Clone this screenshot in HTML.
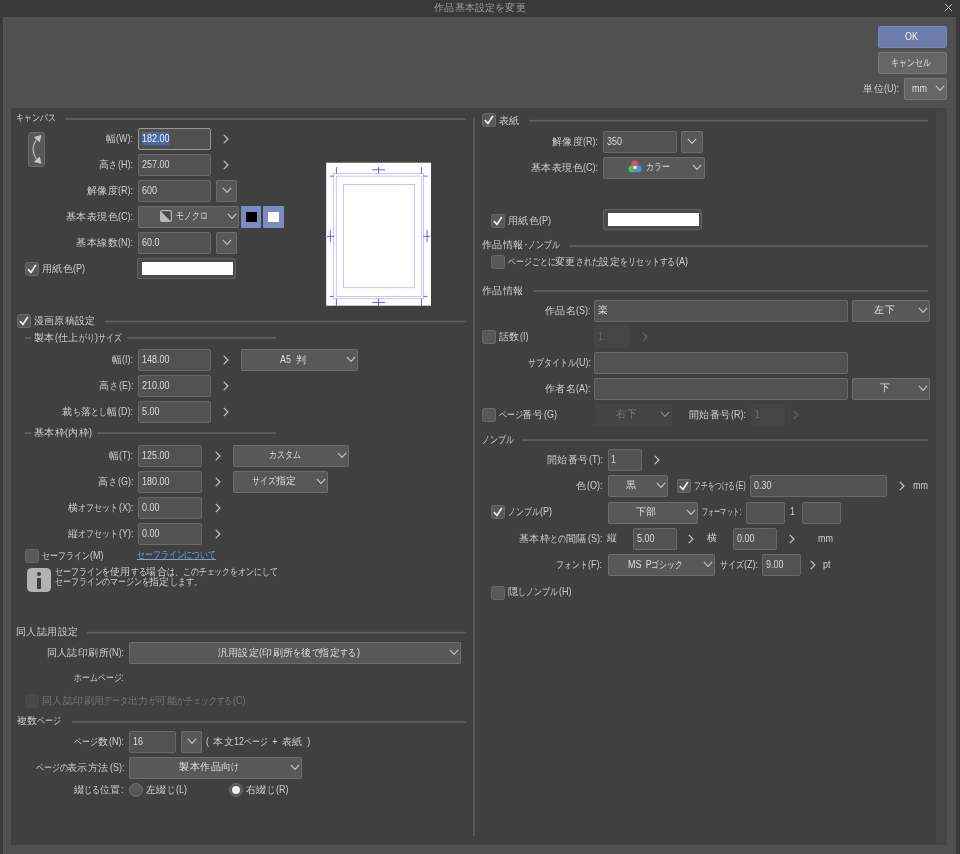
<!DOCTYPE html>
<html lang="ja"><head><meta charset="utf-8"><title>作品基本設定を変更</title>
<style>
*{box-sizing:border-box;margin:0;padding:0}
html,body{width:960px;height:854px;overflow:hidden;background:#393939}
body{position:relative;font-family:"Liberation Sans",sans-serif;font-size:10.4px;color:#cecece;letter-spacing:.4px}
#app{position:absolute;left:0;top:0;width:960px;height:854px;will-change:transform}
#app>div,#app>svg{position:absolute}
.titlebar{left:0;top:0;width:960px;height:17px;background:#393939}
.title{position:absolute;left:380px;width:200px;top:0;height:17px;line-height:15px;text-align:center;color:#9c9c9c;font-size:10.4px;white-space:nowrap;letter-spacing:.15px}
.close{position:absolute;left:943.5px;top:2.8px}
.body{left:3px;top:17px;width:953px;height:837px;background:#505050;box-shadow:inset 1px 0 rgba(255,255,255,.04)}
.panel{left:11px;top:108px;width:925px;height:737px;background:#404040}
.strip{left:936px;top:108px;width:11px;height:737px;background:#454545}
.vl{background:linear-gradient(90deg,rgba(255,255,255,.14) 0 1px,rgba(255,255,255,.11) 1px 2px)}
.hl{}
.t{height:14px;line-height:14px;white-space:nowrap}
.a{display:inline-block;letter-spacing:0;font-size:11.5px;transform:scaleX(.78);transform-origin:0 50%;white-space:pre;word-spacing:2.2px}
.k{display:inline-block;letter-spacing:0;transform:scaleX(.79);transform-origin:0 50%;white-space:pre}
.k+.a{margin-left:1px}
.tr{text-align:right}
.dim{color:#767676}
.link{color:#6fa2dc}
.link span{text-decoration:underline}
.sq{display:inline-block;white-space:nowrap}
.note{height:auto;line-height:10.4px;white-space:nowrap}
.inp{background:#525252;border:1px solid #686868;border-radius:2px;padding-left:2.8px;line-height:18px;white-space:nowrap;overflow:hidden;font-size:10.4px;color:#dcdcdc}
.inp.foc{border-color:#989898;background:#505050}
.inp.dis{background:#454545;border-color:#464646;color:#6c6c6c}
.sel{background:#4a68a2;color:#f0f0f0;padding:1px 0 1px}
.dd{background:rgba(255,255,255,.125);border:1px solid rgba(255,255,255,.13);border-radius:2px;line-height:18px;white-space:nowrap;overflow:hidden;color:#dedede}
.dd .ddt{position:absolute;left:0;right:12.5px;top:0;bottom:0;text-align:center;display:block}
.dd .chev{position:absolute;right:1.5px;top:6px;color:#c4c4c4}
.dd.bt .chev{right:4.5px}
.dd.dis{background:#444;border-color:#454545;color:#7a7a7a}
.dd.dis .chev{color:#8a8a8a}
.dd .ic{vertical-align:-3px;margin-right:4px;margin-left:2px}
.cb{background:#585858;border:1px solid #686868;border-radius:2.5px}
.cb svg{position:absolute;left:-1px;top:-1px}
.cb.dis{background:#484848;border-color:#4a4a4a}
.rd{background:#585858;border:1px solid #6c6c6c;border-radius:50%}
.rd i{position:absolute;left:2px;top:2px;width:8px;height:8px;border-radius:50%;background:#ececec}
.ar{color:#c6c6c6}
.ar.dim{color:#646464}
.ok{background:#6c7dab;border:1px solid #7384b2;border-radius:2px;text-align:center;padding-right:2px;line-height:19px;color:#f0f0f0;font-size:10.4px}
.cancel{background:#666;border:1px solid #7a7a7a;border-radius:2px;text-align:center;padding-right:3px;line-height:19px;color:#e0e0e0}
.swap{background:#585858;border:1px solid #696969;border-radius:3px}
.swap svg{position:absolute;left:-1px;top:-1px}
.sw{background:#7b8dc0;border-radius:1px}
.sw i{position:absolute;left:5px;top:5.5px;width:10.5px;height:10px}
.paper{background:#4c4c4c;border:1px solid #626262;border-radius:2px}
.paper i{position:absolute;left:3.5px;top:2.5px;right:2px;bottom:3.5px;background:#fff}
.info{background:#b2b2b2;border-radius:4.5px}
.info i{position:absolute;left:10px;top:3.5px;width:4px;height:4px;border-radius:50%;background:#3c3c3c}
.info b{position:absolute;left:10px;top:9.5px;width:3.6px;height:11.5px;border-radius:1px;background:#3c3c3c}
</style></head>
<body>
<div id="app">
<div class="titlebar"><div class="title">作品基本設定を変更</div><svg class="close" width="9" height="9" viewBox="0 0 9 9"><path d="M0.9 0.9 L8.1 8.1 M8.1 0.9 L0.9 8.1" stroke="#c4c4c4" stroke-width="0.95" fill="none"/></svg></div>
<div class="body"></div>
<div class="panel"></div><div class="strip"></div>
<div class="vl" style="left:473px;top:117px;width:2px;height:719px;"></div>
<div class="ok" style="left:878px;top:26px;width:69px;height:22px;"><span class="a" style="margin-right:-3.7px">OK</span></div>
<div class="cancel" style="left:878px;top:52px;width:69px;height:22px;"><span class="k" style="margin-right:-10.9px">キャンセル</span></div>
<div class="t tr " style="left:699px;top:80.5px;width:200px">単位<span class="a" style="margin-right:-4.2px">(U):</span></div>
<div class="dd " style="left:904px;top:78px;width:43px;height:22px;"><span class="ddt"><span class="a" style="margin-right:-4.2px">mm</span></span><svg class="chev" width="10" height="7" viewBox="0 0 10 7"><path d="M0.85 0.9 L5 5.3 L9.15 0.9" fill="none" stroke="currentColor" stroke-width="1.15"/></svg></div>
<div class="t " style="left:16px;top:111px"><span class="k" style="margin-right:-10.9px">キャンバス</span></div>
<div class="hl" style="left:65px;top:118px;width:401px;height:2px;background:linear-gradient(rgba(255,255,255,0.128) 0px 1px,rgba(255,255,255,0.144) 1px 2px)"></div>
<div class="swap" style="left:28px;top:132px;width:17px;height:35px;"><svg width="17" height="35" viewBox="0 0 17 35"><path d="M8.4 7.6 Q1.6 17.4 8.4 27.2" fill="none" stroke="#c4c4c4" stroke-width="1.1"/><path d="M5.7 4.9 L13.6 2.9 L11.7 10.3 Z" fill="#c6c6c6"/><path d="M5.7 30.1 L13.6 31.8 L11.7 24.4 Z" fill="#c6c6c6"/></svg></div>
<div class="t tr " style="left:-67px;top:130.5px;width:200px">幅<span class="a" style="margin-right:-4.8px">(W):</span></div>
<div class="inp foc" style="left:138px;top:128px;width:73px;height:22px;"><span class="sel"><span class="a" style="margin-right:-7.7px">182.00</span></span></div>
<svg class="ar " style="left:222.5px;top:133.5px" width="6" height="10" viewBox="0 0 6 10"><path d="M0.8 0.8 L4.9 5 L0.8 9.2" fill="none" stroke="currentColor" stroke-width="1.2"/></svg>
<div class="t tr " style="left:-67px;top:156.5px;width:200px">高<span class="k" style="margin-right:-2.2px">さ</span><span class="a" style="margin-right:-4.2px">(H):</span></div>
<div class="inp " style="left:138px;top:154px;width:73px;height:22px;"><span class="a" style="margin-right:-7.7px">257.00</span></div>
<svg class="ar " style="left:222.5px;top:159.5px" width="6" height="10" viewBox="0 0 6 10"><path d="M0.8 0.8 L4.9 5 L0.8 9.2" fill="none" stroke="currentColor" stroke-width="1.2"/></svg>
<div class="t tr " style="left:-67px;top:182.5px;width:200px">解像度<span class="a" style="margin-right:-4.2px">(R):</span></div>
<div class="inp " style="left:138px;top:180px;width:73px;height:22px;"><span class="a" style="margin-right:-4.2px">600</span></div>
<div class="dd bt" style="left:216px;top:180px;width:21px;height:22px;"><svg class="chev" width="10" height="7" viewBox="0 0 10 7"><path d="M0.85 0.9 L5 5.3 L9.15 0.9" fill="none" stroke="currentColor" stroke-width="1.15"/></svg></div>
<div class="t tr " style="left:-67px;top:209px;width:200px">基本表現色<span class="a" style="margin-right:-4.2px">(C):</span></div>
<div class="dd " style="left:138px;top:206px;width:101px;height:22px;"><span class="ddt"><svg class="ic" width="12" height="12" viewBox="0 0 12 12"><rect x="0.6" y="0.6" width="10.8" height="10.8" rx="1.6" fill="#474747" stroke="#b8b8b8" stroke-width="1.2"/><path d="M1 1.6 L10.4 11 L1 11 Z" fill="#b8b8b8"/></svg><span class="k" style="margin-right:-8.7px">モノクロ</span></span><svg class="chev" width="10" height="7" viewBox="0 0 10 7"><path d="M0.85 0.9 L5 5.3 L9.15 0.9" fill="none" stroke="currentColor" stroke-width="1.15"/></svg></div>
<div class="sw" style="left:241px;top:206px;width:20px;height:22px;"><i style="background:#000"></i></div>
<div class="sw" style="left:263px;top:206px;width:21px;height:22px;"><i style="background:#fff"></i></div>
<div class="t tr " style="left:-67px;top:234.5px;width:200px">基本線数<span class="a" style="margin-right:-4.2px">(N):</span></div>
<div class="inp " style="left:138px;top:232px;width:73px;height:22px;"><span class="a" style="margin-right:-4.9px">60.0</span></div>
<div class="dd bt" style="left:216px;top:232px;width:21px;height:22px;"><svg class="chev" width="10" height="7" viewBox="0 0 10 7"><path d="M0.85 0.9 L5 5.3 L9.15 0.9" fill="none" stroke="currentColor" stroke-width="1.15"/></svg></div>
<div class="cb " style="left:25px;top:262px;width:14px;height:14px;"><svg width="14" height="14" viewBox="0 0 14 14"><path d="M2.9 7.2 L6 10.5 L10.9 2.9" fill="none" stroke="#f0f0f0" stroke-width="1.7"/></svg></div>
<div class="t " style="left:42px;top:260.5px">用紙色<span class="a" style="margin-right:-3.4px">(P)</span></div>
<div class="paper" style="left:137px;top:258px;width:99px;height:21px;"><i></i></div>
<svg class="pv" style="left:326px;top:162px" width="106" height="145" viewBox="0 0 106 145">
<rect x="0.2" y="0.7" width="104.8" height="143" fill="#fff"/>
<g fill="none" stroke="#9696ff" stroke-width="0.55">
<rect x="7.6" y="11.5" width="89.8" height="125.3"/>
<rect x="10.2" y="14.1" width="85.3" height="120.3"/>
<rect x="17.3" y="22.5" width="71.3" height="103.3"/>
</g>
<g fill="none" stroke="#4444f2" stroke-width="0.85">
<path d="M10.4 5 V11.5 M95.5 5 V11.5 M4 14.1 H7.6 M97.4 14.1 H101.6"/>
<path d="M10.4 136.8 V143.7 M95.5 136.8 V143.7 M4 134.4 H7.6 M97.4 134.4 H101.6"/>
<path d="M46.2 7.8 H59 M52.5 5 V11.5 M46.2 140.5 H59 M52.5 136.8 V143.7"/>
<path d="M4.3 68.2 V79.9 M1 74.4 H8 M101.1 68.2 V79.9 M97 74.4 H104.2"/>
</g></svg>
<div class="cb " style="left:16.5px;top:314px;width:14px;height:14px;"><svg width="14" height="14" viewBox="0 0 14 14"><path d="M2.9 7.2 L6 10.5 L10.9 2.9" fill="none" stroke="#f0f0f0" stroke-width="1.7"/></svg></div>
<div class="t " style="left:33.5px;top:314px">漫画原稿設定</div>
<div class="hl" style="left:105px;top:320px;width:361px;height:3px;background:linear-gradient(rgba(255,255,255,0.056) 0px 1px,rgba(255,255,255,0.160) 1px 2px,rgba(255,255,255,0.056) 2px 3px)"></div>
<div class="hl" style="left:25px;top:337px;width:6px;height:2px;background:linear-gradient(rgba(255,255,255,0.152) 0px 1px,rgba(255,255,255,0.120) 1px 2px)"></div>
<div class="t " style="left:34px;top:330px">製本<span class="a" style="margin-right:-0.8px">(</span>仕上<span class="k" style="margin-right:-4.4px">がり</span><span class="a" style="margin-right:-0.8px">)</span><span class="k" style="margin-right:-6.6px">サイズ</span></div>
<div class="hl" style="left:127px;top:337px;width:149px;height:2px;background:linear-gradient(rgba(255,255,255,0.152) 0px 1px,rgba(255,255,255,0.120) 1px 2px)"></div>
<div class="t tr " style="left:-67px;top:352px;width:200px">幅<span class="a" style="margin-right:-3.1px">(I):</span></div>
<div class="inp " style="left:138px;top:349px;width:73px;height:22px;"><span class="a" style="margin-right:-7.7px">148.00</span></div>
<svg class="ar " style="left:222.5px;top:355px" width="6" height="10" viewBox="0 0 6 10"><path d="M0.8 0.8 L4.9 5 L0.8 9.2" fill="none" stroke="currentColor" stroke-width="1.2"/></svg>
<div class="dd " style="left:241px;top:349px;width:117px;height:22px;"><span class="ddt"><span class="a" style="margin-right:-4.3px">A5 </span>判</span><svg class="chev" width="10" height="7" viewBox="0 0 10 7"><path d="M0.85 0.9 L5 5.3 L9.15 0.9" fill="none" stroke="currentColor" stroke-width="1.15"/></svg></div>
<div class="t tr " style="left:-67px;top:378px;width:200px">高<span class="k" style="margin-right:-2.2px">さ</span><span class="a" style="margin-right:-4.1px">(E):</span></div>
<div class="inp " style="left:138px;top:375px;width:73px;height:22px;"><span class="a" style="margin-right:-7.7px">210.00</span></div>
<svg class="ar " style="left:222.5px;top:381px" width="6" height="10" viewBox="0 0 6 10"><path d="M0.8 0.8 L4.9 5 L0.8 9.2" fill="none" stroke="currentColor" stroke-width="1.2"/></svg>
<div class="t tr " style="left:-67px;top:404px;width:200px">裁<span class="k" style="margin-right:-2.2px">ち</span>落<span class="k" style="margin-right:-4.4px">とし</span>幅<span class="a" style="margin-right:-4.2px">(D):</span></div>
<div class="inp " style="left:138px;top:401px;width:73px;height:22px;"><span class="a" style="margin-right:-4.9px">5.00</span></div>
<svg class="ar " style="left:222.5px;top:407px" width="6" height="10" viewBox="0 0 6 10"><path d="M0.8 0.8 L4.9 5 L0.8 9.2" fill="none" stroke="currentColor" stroke-width="1.2"/></svg>
<div class="hl" style="left:25px;top:432px;width:6px;height:2px;background:linear-gradient(rgba(255,255,255,0.120) 0px 1px,rgba(255,255,255,0.152) 1px 2px)"></div>
<div class="t " style="left:34px;top:425px">基本枠<span class="a" style="margin-right:-0.8px">(</span>内枠<span class="a" style="margin-right:-0.8px">)</span></div>
<div class="hl" style="left:97px;top:432px;width:179px;height:2px;background:linear-gradient(rgba(255,255,255,0.120) 0px 1px,rgba(255,255,255,0.152) 1px 2px)"></div>
<div class="t tr " style="left:-67px;top:447.5px;width:200px">幅<span class="a" style="margin-right:-3.9px">(T):</span></div>
<div class="inp " style="left:138px;top:445px;width:64px;height:22px;"><span class="a" style="margin-right:-7.7px">125.00</span></div>
<svg class="ar " style="left:214.5px;top:450.5px" width="6" height="10" viewBox="0 0 6 10"><path d="M0.8 0.8 L4.9 5 L0.8 9.2" fill="none" stroke="currentColor" stroke-width="1.2"/></svg>
<div class="dd " style="left:233px;top:445px;width:116px;height:22px;"><span class="ddt"><span class="k" style="margin-right:-8.7px">カスタム</span></span><svg class="chev" width="10" height="7" viewBox="0 0 10 7"><path d="M0.85 0.9 L5 5.3 L9.15 0.9" fill="none" stroke="currentColor" stroke-width="1.15"/></svg></div>
<div class="t tr " style="left:-67px;top:473.5px;width:200px">高<span class="k" style="margin-right:-2.2px">さ</span><span class="a" style="margin-right:-4.4px">(G):</span></div>
<div class="inp " style="left:138px;top:471px;width:64px;height:22px;"><span class="a" style="margin-right:-7.7px">180.00</span></div>
<svg class="ar " style="left:214.5px;top:476.5px" width="6" height="10" viewBox="0 0 6 10"><path d="M0.8 0.8 L4.9 5 L0.8 9.2" fill="none" stroke="currentColor" stroke-width="1.2"/></svg>
<div class="dd " style="left:233px;top:471px;width:95px;height:22px;"><span class="ddt"><span class="k" style="margin-right:-6.6px">サイズ</span>指定</span><svg class="chev" width="10" height="7" viewBox="0 0 10 7"><path d="M0.85 0.9 L5 5.3 L9.15 0.9" fill="none" stroke="currentColor" stroke-width="1.15"/></svg></div>
<div class="t tr " style="left:-67px;top:499.5px;width:200px">横<span class="k" style="margin-right:-10.9px">オフセット</span><span class="a" style="margin-right:-4.1px">(X):</span></div>
<div class="inp " style="left:138px;top:497px;width:64px;height:22px;"><span class="a" style="margin-right:-4.9px">0.00</span></div>
<svg class="ar " style="left:214.5px;top:502.5px" width="6" height="10" viewBox="0 0 6 10"><path d="M0.8 0.8 L4.9 5 L0.8 9.2" fill="none" stroke="currentColor" stroke-width="1.2"/></svg>
<div class="t tr " style="left:-67px;top:525.5px;width:200px">縦<span class="k" style="margin-right:-10.9px">オフセット</span><span class="a" style="margin-right:-4.1px">(Y):</span></div>
<div class="inp " style="left:138px;top:523px;width:64px;height:22px;"><span class="a" style="margin-right:-4.9px">0.00</span></div>
<svg class="ar " style="left:214.5px;top:528.5px" width="6" height="10" viewBox="0 0 6 10"><path d="M0.8 0.8 L4.9 5 L0.8 9.2" fill="none" stroke="currentColor" stroke-width="1.2"/></svg>
<div class="cb " style="left:25px;top:549px;width:14px;height:14px;"></div>
<div class="t " style="left:42px;top:548px"><span class="k" style="margin-right:-13.1px">セーフライン</span><span class="a" style="margin-right:-3.8px">(M)</span></div>
<div class="t link" style="left:137px;top:548px"><span class="k" style="margin-right:-21.8px">セーフラインについて</span></div>
<div class="info" style="left:27px;top:568px;width:24px;height:24px;"><i></i><b></b></div>
<div class="t note" style="left:55px;top:567px"><span class="k" style="margin-right:-15.3px">セーフラインを</span>使用<span class="k" style="margin-right:-4.4px">する</span>場合<span class="k" style="margin-right:-30.6px">は、このチェックをオンにして</span><br><span class="k" style="margin-right:-26.2px">セーフラインのマージンを</span>指定<span class="k" style="margin-right:-8.7px">します。</span></div>
<div class="t " style="left:16px;top:625px">同人誌用設定</div>
<div class="hl" style="left:87px;top:631px;width:379px;height:3px;background:linear-gradient(rgba(255,255,255,0.024) 0px 1px,rgba(255,255,255,0.160) 1px 2px,rgba(255,255,255,0.088) 2px 3px)"></div>
<div class="t tr " style="left:-76px;top:645px;width:200px">同人誌印刷所<span class="a" style="margin-right:-4.2px">(N):</span></div>
<div class="dd " style="left:129px;top:642px;width:332px;height:22px;"><span class="ddt">汎用設定<span class="a" style="margin-right:-0.8px">(</span>印刷所<span class="k" style="margin-right:-2.2px">を</span>後<span class="k" style="margin-right:-2.2px">で</span>指定<span class="k" style="margin-right:-4.4px">する</span><span class="a" style="margin-right:-0.8px">)</span></span><svg class="chev" width="10" height="7" viewBox="0 0 10 7"><path d="M0.85 0.9 L5 5.3 L9.15 0.9" fill="none" stroke="currentColor" stroke-width="1.15"/></svg></div>
<div class="t tr " style="left:-76px;top:670px;width:200px"><span class="k" style="margin-right:-13.1px">ホームページ</span><span class="a" style="margin-right:-0.7px">:</span></div>
<div class="cb dis" style="left:25px;top:694px;width:14px;height:14px;"></div>
<div class="t dim" style="left:42px;top:693px">同人誌印刷用<span class="k" style="margin-right:-6.6px">データ</span>出力<span class="k" style="margin-right:-2.2px">が</span>可能<span class="k" style="margin-right:-15.3px">かチェックする</span><span class="a" style="margin-right:-3.5px">(C)</span></div>
<div class="t " style="left:16.5px;top:714px">複数<span class="k" style="margin-right:-6.6px">ページ</span></div>
<div class="hl" style="left:72px;top:721px;width:394px;height:2px;background:linear-gradient(rgba(255,255,255,0.152) 0px 1px,rgba(255,255,255,0.120) 1px 2px)"></div>
<div class="t tr " style="left:-76px;top:733.5px;width:200px"><span class="k" style="margin-right:-6.6px">ページ</span>数<span class="a" style="margin-right:-4.2px">(N):</span></div>
<div class="inp " style="left:129px;top:731px;width:47px;height:22px;"><span class="a" style="margin-right:-2.8px">16</span></div>
<div class="dd bt" style="left:181px;top:731px;width:21px;height:22px;"><svg class="chev" width="10" height="7" viewBox="0 0 10 7"><path d="M0.85 0.9 L5 5.3 L9.15 0.9" fill="none" stroke="currentColor" stroke-width="1.15"/></svg></div>
<div class="t " style="left:206px;top:733.5px"><span class="a" style="margin-right:-2.0px">( </span>本文<span class="a" style="margin-right:-2.8px">12</span><span class="k" style="margin-right:-6.6px">ページ</span><span class="a" style="margin-right:-3.9px"> + </span>表紙<span class="a" style="margin-right:-2.0px"> )</span></div>
<div class="t tr " style="left:-76px;top:759.5px;width:200px"><span class="k" style="margin-right:-8.7px">ページの</span>表示方法<span class="a" style="margin-right:-4.1px">(S):</span></div>
<div class="dd " style="left:129px;top:757px;width:173px;height:22px;"><span class="ddt">製本作品向<span class="k" style="margin-right:-2.2px">け</span></span><svg class="chev" width="10" height="7" viewBox="0 0 10 7"><path d="M0.85 0.9 L5 5.3 L9.15 0.9" fill="none" stroke="currentColor" stroke-width="1.15"/></svg></div>
<div class="t tr " style="left:-76px;top:782px;width:200px">綴<span class="k" style="margin-right:-4.4px">じる</span>位置<span class="a" style="margin-right:-0.7px">:</span></div>
<div class="rd" style="left:129px;top:783px;width:14px;height:14px;"></div>
<div class="t " style="left:146px;top:782px">左綴<span class="k" style="margin-right:-2.2px">じ</span><span class="a" style="margin-right:-3.1px">(L)</span></div>
<div class="rd" style="left:228.5px;top:783px;width:14px;height:14px;"><i></i></div>
<div class="t " style="left:246px;top:782px">右綴<span class="k" style="margin-right:-2.2px">じ</span><span class="a" style="margin-right:-3.5px">(R)</span></div>
<div class="cb " style="left:482px;top:113px;width:14px;height:14px;"><svg width="14" height="14" viewBox="0 0 14 14"><path d="M2.9 7.2 L6 10.5 L10.9 2.9" fill="none" stroke="#f0f0f0" stroke-width="1.7"/></svg></div>
<div class="t " style="left:499px;top:113.5px">表紙</div>
<div class="hl" style="left:529px;top:119px;width:398.5px;height:3px;background:linear-gradient(rgba(255,255,255,0.024) 0px 1px,rgba(255,255,255,0.160) 1px 2px,rgba(255,255,255,0.088) 2px 3px)"></div>
<div class="t tr " style="left:398px;top:134px;width:200px">解像度<span class="a" style="margin-right:-4.2px">(R):</span></div>
<div class="inp " style="left:603px;top:131px;width:74px;height:22px;"><span class="a" style="margin-right:-4.2px">350</span></div>
<div class="dd bt" style="left:681px;top:131px;width:21.5px;height:22px;"><svg class="chev" width="10" height="7" viewBox="0 0 10 7"><path d="M0.85 0.9 L5 5.3 L9.15 0.9" fill="none" stroke="currentColor" stroke-width="1.15"/></svg></div>
<div class="t tr " style="left:398px;top:160px;width:200px">基本表現色<span class="a" style="margin-right:-4.2px">(C):</span></div>
<div class="dd " style="left:603px;top:157px;width:101.5px;height:22px;"><span class="ddt"><svg class="ic" width="14" height="13" viewBox="0 0 14 13"><circle cx="7" cy="4" r="3.6" fill="#e0525a"/><circle cx="4" cy="9" r="3.6" fill="#58b85c"/><circle cx="10" cy="9" r="3.6" fill="#4f8fe0"/><circle cx="7" cy="7.4" r="1.6" fill="#f0f0f0"/></svg><span class="k" style="margin-right:-6.6px">カラー</span></span><svg class="chev" width="10" height="7" viewBox="0 0 10 7"><path d="M0.85 0.9 L5 5.3 L9.15 0.9" fill="none" stroke="currentColor" stroke-width="1.15"/></svg></div>
<div class="cb " style="left:491px;top:214px;width:14px;height:14px;"><svg width="14" height="14" viewBox="0 0 14 14"><path d="M2.9 7.2 L6 10.5 L10.9 2.9" fill="none" stroke="#f0f0f0" stroke-width="1.7"/></svg></div>
<div class="t " style="left:508px;top:212.5px">用紙色<span class="a" style="margin-right:-3.4px">(P)</span></div>
<div class="paper" style="left:603px;top:209px;width:99px;height:21px;"><i></i></div>
<div class="t " style="left:482px;top:238px">作品情報<span class="k" style="margin:0 -4.2px 0 -1.8px">・</span><span class="k" style="margin-right:-8.7px">ノンブル</span></div>
<div class="hl" style="left:569px;top:245px;width:358.5px;height:2px;background:linear-gradient(rgba(255,255,255,0.136) 0px 1px,rgba(255,255,255,0.136) 1px 2px)"></div>
<div class="cb " style="left:491px;top:255px;width:14px;height:14px;"></div>
<div class="t " style="left:508px;top:253.5px"><span class="k" style="margin-right:-13.1px">ページごとに</span>変更<span class="k" style="margin-right:-6.6px">された</span>設定<span class="k" style="margin-right:-15.3px">をリセットする</span><span class="a" style="margin-right:-3.4px">(A)</span></div>
<div class="t " style="left:482px;top:283.5px">作品情報</div>
<div class="hl" style="left:533px;top:290px;width:394.5px;height:2px;background:linear-gradient(rgba(255,255,255,0.136) 0px 1px,rgba(255,255,255,0.136) 1px 2px)"></div>
<div class="t tr " style="left:390.5px;top:303px;width:200px">作品名<span class="a" style="margin-right:-4.1px">(S):</span></div>
<div class="inp " style="left:594px;top:300px;width:254px;height:22px;">楽</div>
<div class="dd " style="left:852px;top:300px;width:78px;height:22px;"><span class="ddt">左下</span><svg class="chev" width="10" height="7" viewBox="0 0 10 7"><path d="M0.85 0.9 L5 5.3 L9.15 0.9" fill="none" stroke="currentColor" stroke-width="1.15"/></svg></div>
<div class="cb " style="left:482px;top:330px;width:14px;height:14px;"></div>
<div class="t " style="left:499px;top:328.5px">話数<span class="a" style="margin-right:-2.4px">(I)</span></div>
<div class="inp dis" style="left:594px;top:326px;width:35px;height:22px;"><span class="a" style="margin-right:-1.4px">1</span></div>
<svg class="ar dim" style="left:642px;top:331.5px" width="6" height="10" viewBox="0 0 6 10"><path d="M0.8 0.8 L4.9 5 L0.8 9.2" fill="none" stroke="currentColor" stroke-width="1.2"/></svg>
<div class="t tr " style="left:390.5px;top:355px;width:200px"><span class="k" style="margin-right:-13.1px">サブタイトル</span><span class="a" style="margin-right:-4.2px">(U):</span></div>
<div class="inp " style="left:594px;top:352px;width:254px;height:22px;"></div>
<div class="t tr " style="left:390.5px;top:380.5px;width:200px">作者名<span class="a" style="margin-right:-4.1px">(A):</span></div>
<div class="inp " style="left:594px;top:378px;width:254px;height:22px;"></div>
<div class="dd " style="left:852px;top:378px;width:78px;height:22px;"><span class="ddt">下</span><svg class="chev" width="10" height="7" viewBox="0 0 10 7"><path d="M0.85 0.9 L5 5.3 L9.15 0.9" fill="none" stroke="currentColor" stroke-width="1.15"/></svg></div>
<div class="cb " style="left:482px;top:407.5px;width:14px;height:14px;"></div>
<div class="t " style="left:499px;top:406.5px"><span class="k" style="margin-right:-6.6px">ページ</span>番号<span class="a" style="margin-right:-3.7px">(G)</span></div>
<div class="dd dis" style="left:594px;top:404px;width:78px;height:22px;"><span class="ddt">右下</span><svg class="chev" width="10" height="7" viewBox="0 0 10 7"><path d="M0.85 0.9 L5 5.3 L9.15 0.9" fill="none" stroke="currentColor" stroke-width="1.15"/></svg></div>
<div class="t tr " style="left:545.5px;top:406.5px;width:200px">開始番号<span class="a" style="margin-right:-4.2px">(R):</span></div>
<div class="inp dis" style="left:751px;top:404px;width:34px;height:22px;"><span class="a" style="margin-right:-1.4px">1</span></div>
<svg class="ar dim" style="left:792.5px;top:409.5px" width="6" height="10" viewBox="0 0 6 10"><path d="M0.8 0.8 L4.9 5 L0.8 9.2" fill="none" stroke="currentColor" stroke-width="1.2"/></svg>
<div class="t " style="left:482px;top:432.5px"><span class="k" style="margin-right:-8.7px">ノンブル</span></div>
<div class="hl" style="left:522px;top:439px;width:405.5px;height:2px;background:linear-gradient(rgba(255,255,255,0.120) 0px 1px,rgba(255,255,255,0.152) 1px 2px)"></div>
<div class="t tr " style="left:402.5px;top:451.5px;width:200px">開始番号<span class="a" style="margin-right:-3.9px">(T):</span></div>
<div class="inp " style="left:607.5px;top:449px;width:34.5px;height:22px;"><span class="a" style="margin-right:-1.4px">1</span></div>
<svg class="ar " style="left:654px;top:454.5px" width="6" height="10" viewBox="0 0 6 10"><path d="M0.8 0.8 L4.9 5 L0.8 9.2" fill="none" stroke="currentColor" stroke-width="1.2"/></svg>
<div class="t tr " style="left:402px;top:477.5px;width:200px">色<span class="a" style="margin-right:-4.4px">(O):</span></div>
<div class="dd " style="left:607.5px;top:475px;width:60.5px;height:22px;"><span class="ddt">黒</span><svg class="chev" width="10" height="7" viewBox="0 0 10 7"><path d="M0.85 0.9 L5 5.3 L9.15 0.9" fill="none" stroke="currentColor" stroke-width="1.15"/></svg></div>
<div class="cb " style="left:677px;top:479px;width:14px;height:14px;"><svg width="14" height="14" viewBox="0 0 14 14"><path d="M2.9 7.2 L6 10.5 L10.9 2.9" fill="none" stroke="#f0f0f0" stroke-width="1.7"/></svg></div>
<div class="t tr " style="left:545.5px;top:477.5px;width:200px"><span class="sq" style="transform:scaleX(0.86);transform-origin:100% 50%"><span class="k" style="margin-right:-13.1px">フチをつける</span><span class="a" style="margin-right:-3.4px">(E)</span></span></div>
<div class="inp " style="left:750px;top:475px;width:137px;height:22px;"><span class="a" style="margin-right:-4.9px">0.30</span></div>
<svg class="ar " style="left:898.5px;top:480.5px" width="6" height="10" viewBox="0 0 6 10"><path d="M0.8 0.8 L4.9 5 L0.8 9.2" fill="none" stroke="currentColor" stroke-width="1.2"/></svg>
<div class="t " style="left:913px;top:477.5px"><span class="a" style="margin-right:-4.2px">mm</span></div>
<div class="cb " style="left:491px;top:505px;width:14px;height:14px;"><svg width="14" height="14" viewBox="0 0 14 14"><path d="M2.9 7.2 L6 10.5 L10.9 2.9" fill="none" stroke="#f0f0f0" stroke-width="1.7"/></svg></div>
<div class="t " style="left:508px;top:504px"><span class="k" style="margin-right:-8.7px">ノンブル</span><span class="a" style="margin-right:-3.4px">(P)</span></div>
<div class="dd " style="left:607.5px;top:502px;width:90.5px;height:22px;"><span class="ddt">下部</span><svg class="chev" width="10" height="7" viewBox="0 0 10 7"><path d="M0.85 0.9 L5 5.3 L9.15 0.9" fill="none" stroke="currentColor" stroke-width="1.15"/></svg></div>
<div class="t " style="left:702px;top:504px"><span class="sq" style="transform:scaleX(0.78);transform-origin:0 50%"><span class="k" style="margin-right:-13.1px">フォーマット</span><span class="a" style="margin-right:-0.7px">:</span></span></div>
<div class="inp " style="left:746px;top:502px;width:39px;height:22px;"></div>
<div class="t " style="left:790px;top:504px"><span class="a" style="margin-right:-1.4px">1</span></div>
<div class="inp " style="left:802px;top:502px;width:39px;height:22px;"></div>
<div class="t tr " style="left:402px;top:530.5px;width:200px">基本枠<span class="k" style="margin-right:-4.4px">との</span>間隔<span class="a" style="margin-right:-4.1px">(S):</span></div>
<div class="t " style="left:607px;top:530.5px">縦</div>
<div class="inp " style="left:633px;top:528px;width:43.5px;height:22px;"><span class="a" style="margin-right:-4.9px">5.00</span></div>
<svg class="ar " style="left:688px;top:533.5px" width="6" height="10" viewBox="0 0 6 10"><path d="M0.8 0.8 L4.9 5 L0.8 9.2" fill="none" stroke="currentColor" stroke-width="1.2"/></svg>
<div class="t " style="left:707px;top:530.5px">横</div>
<div class="inp " style="left:733px;top:528px;width:43.5px;height:22px;"><span class="a" style="margin-right:-4.9px">0.00</span></div>
<svg class="ar " style="left:788.5px;top:533.5px" width="6" height="10" viewBox="0 0 6 10"><path d="M0.8 0.8 L4.9 5 L0.8 9.2" fill="none" stroke="currentColor" stroke-width="1.2"/></svg>
<div class="t " style="left:817.5px;top:530.5px"><span class="a" style="margin-right:-4.2px">mm</span></div>
<div class="t tr " style="left:402px;top:557px;width:200px"><span class="k" style="margin-right:-8.7px">フォント</span><span class="a" style="margin-right:-3.9px">(F):</span></div>
<div class="dd " style="left:607.5px;top:554px;width:107.5px;height:22px;"><span class="ddt"><span class="a" style="margin-right:-6.7px">MS P</span><span class="k" style="margin-right:-8.7px">ゴシック</span></span><svg class="chev" width="10" height="7" viewBox="0 0 10 7"><path d="M0.85 0.9 L5 5.3 L9.15 0.9" fill="none" stroke="currentColor" stroke-width="1.15"/></svg></div>
<div class="t " style="left:720px;top:557px"><span class="k" style="margin-right:-6.6px">サイズ</span><span class="a" style="margin-right:-3.9px">(Z):</span></div>
<div class="inp " style="left:762px;top:554px;width:39px;height:22px;"><span class="a" style="margin-right:-4.9px">9.00</span></div>
<svg class="ar " style="left:809.5px;top:560px" width="6" height="10" viewBox="0 0 6 10"><path d="M0.8 0.8 L4.9 5 L0.8 9.2" fill="none" stroke="currentColor" stroke-width="1.2"/></svg>
<div class="t " style="left:823px;top:557px"><span class="a" style="margin-right:-2.1px">pt</span></div>
<div class="cb " style="left:491px;top:585.5px;width:14px;height:14px;"></div>
<div class="t " style="left:508px;top:584px">隠<span class="k" style="margin-right:-10.9px">しノンブル</span><span class="a" style="margin-right:-3.5px">(H)</span></div>
</div>
</body></html>
